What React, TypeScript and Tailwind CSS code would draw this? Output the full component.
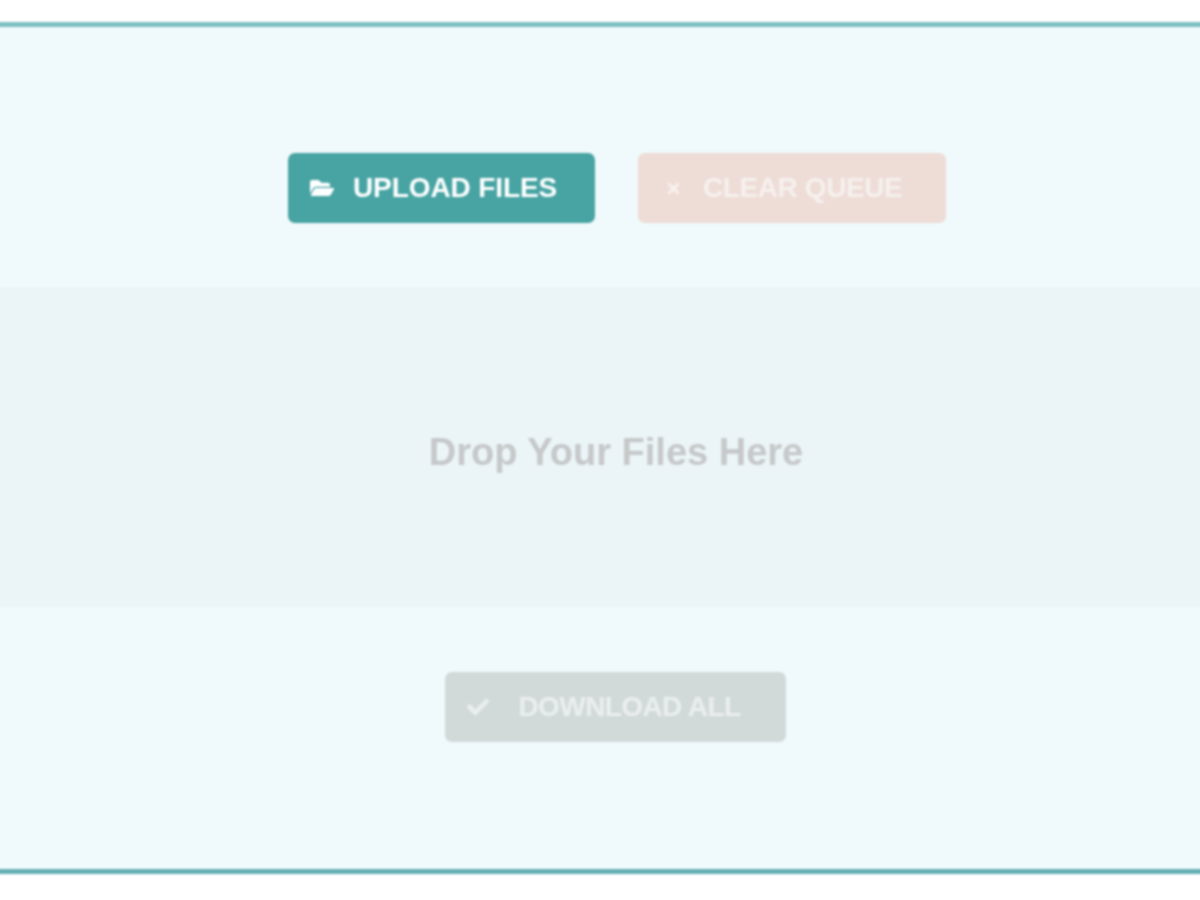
import React from 'react';
import { FaFolderOpen, FaTimes, FaCheck } from 'react-icons/fa';

interface ActionButtonProps {
  label: string;
  icon: React.ReactNode;
  className: string;
  iconClassName: string;
}

const ActionButton: React.FC<ActionButtonProps> = ({ label, icon, className, iconClassName }) => (
  <button
    className={`h-[70px] flex items-center rounded-[7px] font-bold text-[28px] ${className}`}
  >
    <span className={`pl-[22px] flex items-center shrink-0 ${iconClassName}`}>{icon}</span>
    <span className="whitespace-nowrap">{label}</span>
  </button>
);

export default function App() {
  return (
    <div className="w-[1200px] h-[900px] overflow-hidden bg-white font-['Liberation_Sans',Arial,sans-serif]">
      <div className="w-[1216px] -ml-2 pt-[22px] blur-[1.2px]">
        <div className="h-[852px] bg-[#f0f9fb] border-t-[5px] border-b-[5px] border-t-[#7dbfc2] border-b-[#64afb2] flex flex-col">
          <div className="pt-[126px] pl-[34px] flex justify-center gap-[43px]">
            <ActionButton
              label="UPLOAD FILES"
              className="w-[307px] bg-[#48a3a3] text-white tracking-[-0.1px]"
              iconClassName="w-[65px]"
              icon={<FaFolderOpen className="w-[24px] h-[24px]" />}
            />
            <ActionButton
              label="CLEAR QUEUE"
              className="w-[308px] bg-[#eedcd7] text-[#f6f1ed] tracking-[-0.4px]"
              iconClassName="w-[65px]"
              icon={<FaTimes className="ml-[5px] w-[17px] h-[17px]" />}
            />
          </div>
          <div className="mt-[64px] h-[320px] bg-[#ebf5f7] pl-[32px] pt-[10px] flex items-center justify-center">
            <span className="text-[38px] font-bold text-[#c6c8ca]">Drop Your Files Here</span>
          </div>
          <div className="mt-[65px] pl-[30px] flex justify-center">
            <ActionButton
              label="DOWNLOAD ALL"
              className="w-[341px] bg-[#d2dad9] text-[#eaefee] tracking-[-0.6px]"
              iconClassName="w-[74px]"
              icon={<FaCheck className="w-[22px] h-[22px]" />}
            />
          </div>
        </div>
      </div>
    </div>
  );
}
